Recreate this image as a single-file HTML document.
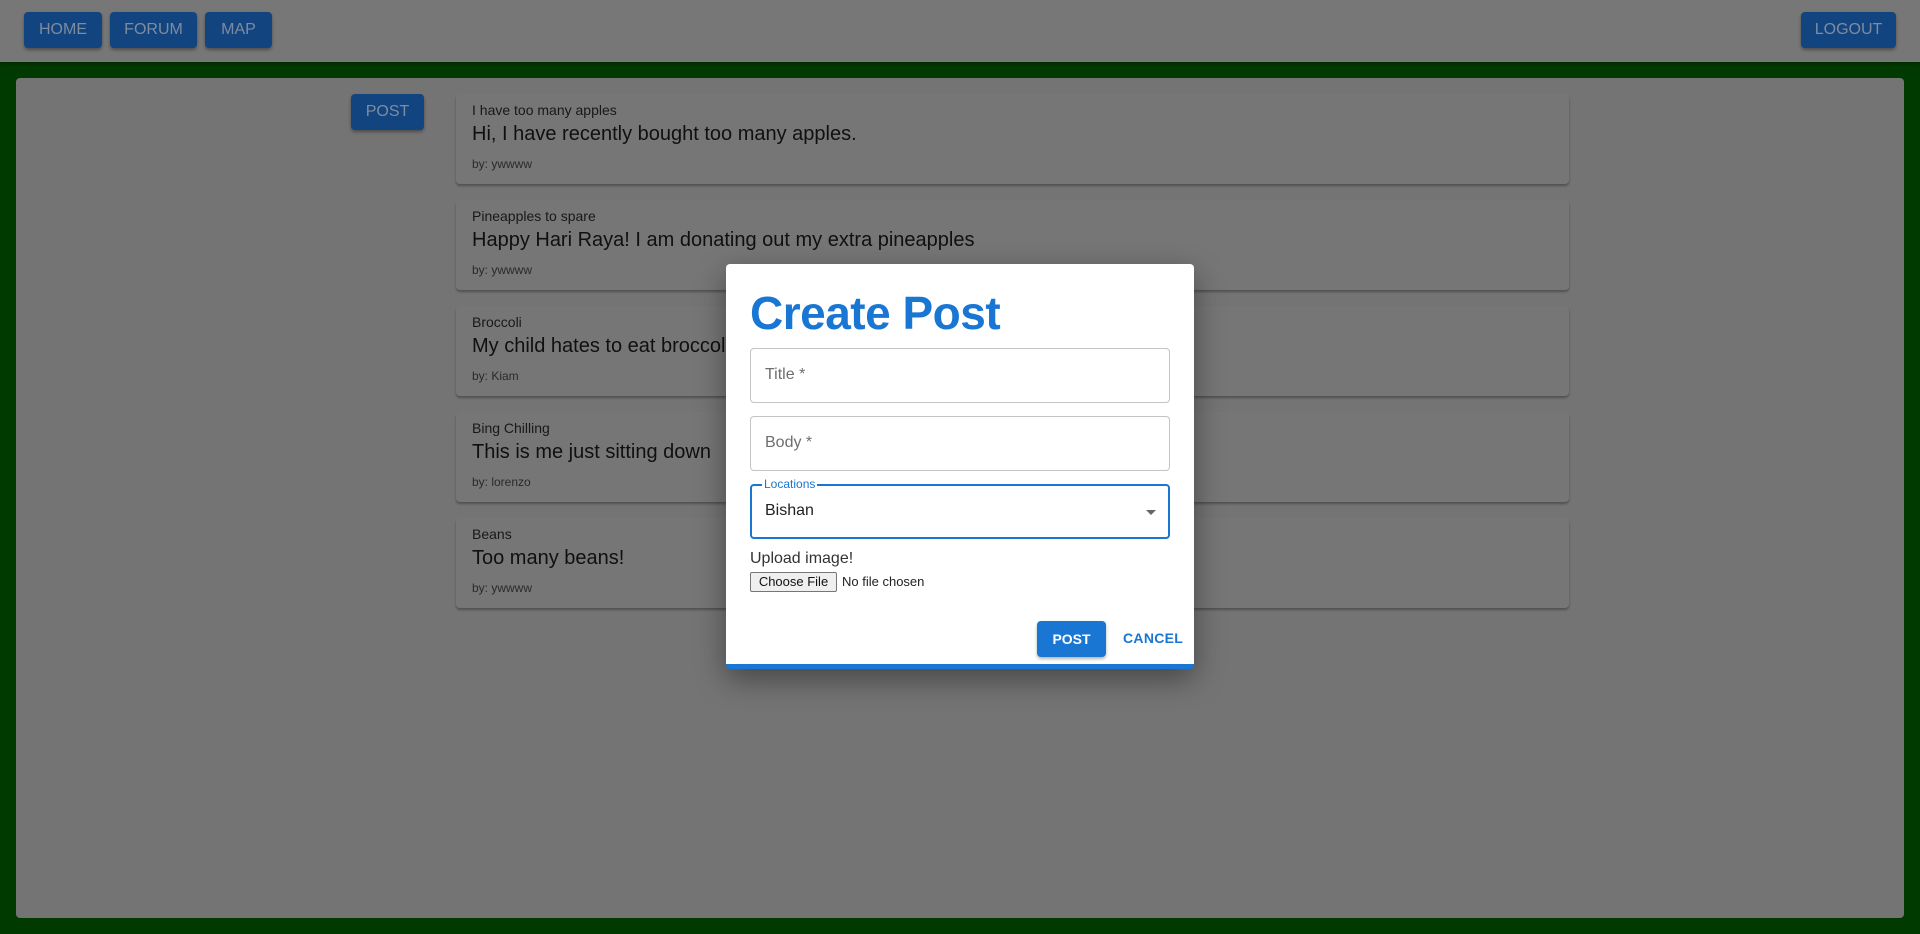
<!DOCTYPE html>
<html><head><meta charset="utf-8"><style>
*{box-sizing:border-box;margin:0;padding:0}
body{width:1920px;height:934px;background:#003a00;font-family:"Liberation Sans",Roboto,sans-serif;position:relative;overflow:hidden}
.hdr{position:absolute;left:0;top:0;width:1920px;height:62px;background:#777;box-shadow:0 2px 4px rgba(0,0,0,.3)}
.btn{position:absolute;background:#124480;color:#7d8ca0;border-radius:4px;font-size:16px;font-weight:500;display:flex;align-items:center;justify-content:center;box-shadow:0 2px 3px rgba(0,0,0,.35)}
.paper{position:absolute;left:16px;top:78px;width:1888px;height:840px;background:#747474;border-radius:4px}
.card{position:absolute;left:456px;width:1113px;height:90px;background:#767676;border-radius:4px;box-shadow:0 2px 2px rgba(0,0,0,.3);color:#101010}
.card .s{position:absolute;left:16px;top:8px;font-size:14px;color:#181818}
.card .m{position:absolute;left:16px;top:29px;font-size:20px}
.card .b{position:absolute;left:16px;top:63px;font-size:12px;color:#2a2a2a}
.modal{position:absolute;left:726px;top:264px;width:468px;height:405px;background:#fff;border-radius:4px;border-bottom:5px solid #1976d2;box-shadow:0 10px 30px rgba(0,0,0,.4)}
.t{position:absolute;left:24px;top:22px;font-size:46px;font-weight:bold;color:#1976d2;letter-spacing:-0.5px}
.f{position:absolute;left:24px;width:420px;height:55px;border:1px solid #c4c4c4;border-radius:4px}
.f span{position:absolute;left:14px;top:17px;font-size:16px;color:#6e6e6e}
</style></head><body>
<div class="hdr"></div>
<div class="btn" style="left:24px;top:12px;width:78px;height:36px">HOME</div>
<div class="btn" style="left:110px;top:12px;width:87px;height:36px">FORUM</div>
<div class="btn" style="left:205px;top:12px;width:67px;height:36px">MAP</div>
<div class="btn" style="left:1801px;top:12px;width:95px;height:36px">LOGOUT</div>
<div class="paper"></div>
<div class="btn" style="left:351px;top:94px;width:73px;height:36px">POST</div>
<div class="card" style="top:94px"><div class="s">I have too many apples</div><div class="m">Hi, I have recently bought too many apples.</div><div class="b">by: ywwww</div></div>
<div class="card" style="top:200px"><div class="s">Pineapples to spare</div><div class="m">Happy Hari Raya! I am donating out my extra pineapples</div><div class="b">by: ywwww</div></div>
<div class="card" style="top:306px"><div class="s">Broccoli</div><div class="m">My child hates to eat broccoli</div><div class="b">by: Kiam</div></div>
<div class="card" style="top:412px"><div class="s">Bing Chilling</div><div class="m">This is me just sitting down</div><div class="b">by: lorenzo</div></div>
<div class="card" style="top:518px"><div class="s">Beans</div><div class="m">Too many beans!</div><div class="b">by: ywwww</div></div>
<div class="modal">
<div class="t">Create Post</div>
<div class="f" style="top:84px"><span>Title *</span></div>
<div class="f" style="top:152px"><span>Body *</span></div>
<div class="f" style="top:220px;border:2px solid #1976d2"><div style="position:absolute;left:10px;top:-9px;background:#fff;padding:0 2px;font-size:12px;color:#1976d2">Locations</div><span style="left:13px;top:16px;color:#222">Bishan</span><div style="position:absolute;right:12px;top:24px;border-left:5px solid transparent;border-right:5px solid transparent;border-top:5px solid #666"></div></div>
<div style="position:absolute;left:24px;top:286px;font-size:16px;color:#333">Upload image!</div>
<div style="position:absolute;left:24px;top:308px;width:87px;height:20px;border:1px solid #767676;border-radius:2px;background:#efefef;font-size:13px;text-align:center;line-height:18px;color:#111">Choose File</div>
<div style="position:absolute;left:116px;top:310px;font-size:13px;color:#222">No file chosen</div>
<div style="position:absolute;left:311px;top:357px;width:69px;height:36px;background:#1976d2;color:#fff;border-radius:4px;font-size:14px;font-weight:bold;display:flex;align-items:center;justify-content:center;box-shadow:0 2px 3px rgba(0,0,0,.3)">POST</div>
<div style="position:absolute;left:397px;top:366px;font-size:14px;font-weight:bold;color:#1976d2;letter-spacing:.3px">CANCEL</div>
</div>
</body></html>
